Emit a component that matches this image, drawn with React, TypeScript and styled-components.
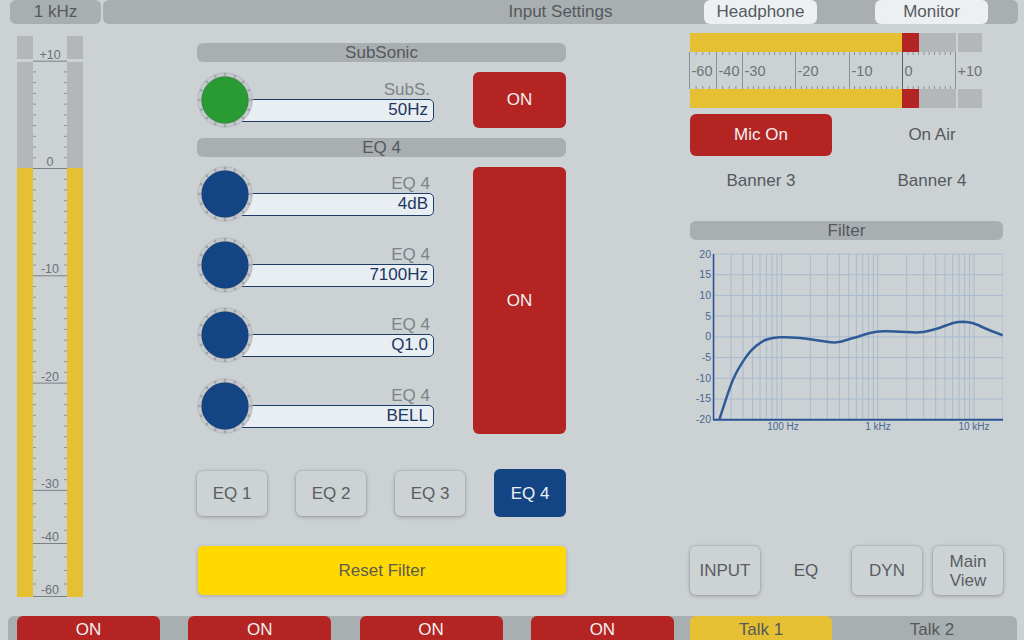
import styled, { createGlobalStyle } from 'styled-components';

const GlobalStyle = createGlobalStyle`
  * { box-sizing: border-box; }
  html, body { margin: 0; padding: 0; background: #ccd1d4; }
  body { font-family: "Liberation Sans", Arial, Helvetica, sans-serif; }
`;

const Screen = styled.div`
  width: 1024px;
  height: 640px;
  overflow: hidden;
  background: #ccd1d4;
  color: #55595d;
  font-size: 17px;
  display: flex;
  flex-direction: column;
`;

const TopBar = styled.header`
  height: 24px;
  flex: none;
  display: flex;
  gap: 2px;
  padding-left: 10px;
`;

const RateTab = styled.div`
  width: 91px;
  background: #a9aeb1;
  border-radius: 6px;
  text-align: center;
  line-height: 24px;
`;

const TitleBar = styled.div`
  width: 915px;
  background: #a9aeb1;
  border-radius: 6px;
  display: grid;
  grid-template-columns: 601px 113px 58px 113px 1fr;
  line-height: 24px;
`;

const Title = styled.div`
  grid-row: 1;
  grid-column: 1 / -1;
  justify-self: center;
`;

const OutTab = styled.div<{ $col: number }>`
  grid-row: 1;
  grid-column: ${p => p.$col};
  background: #edf0f3;
  border-radius: 6px;
  text-align: center;
`;

const Body = styled.main`
  height: 592px;
  flex: none;
  display: grid;
  grid-template-columns: 92px 97px 369px 124px 313px;
  padding-left: 8px;
`;

const MeterColumn = styled.section`
  grid-column: 1;
  padding: 12px 0 0 9px;
`;

const CenterColumn = styled.section`
  grid-column: 3;
  display: flex;
  flex-direction: column;
  padding: 19px 0 21px;
`;

const RightColumn = styled.section`
  grid-column: 5;
  display: flex;
  flex-direction: column;
  padding: 9px 0 21px;
`;

/* vertical level meter */
const VMeter = styled.div`
  display: flex;
  width: 66px;
  height: 561px;
`;

const VChannel = styled.div`
  width: 16px;
  display: flex;
  flex-direction: column;
  gap: 3px;
`;

const VCap = styled.div`
  height: 23px;
  flex: none;
  background: #b3b7ba;
`;

const VTrack = styled.div<{ $level: number }>`
  flex: 1;
  background: linear-gradient(to top, #e6c033 ${p => p.$level}%, #b3b7ba ${p => p.$level}%);
`;

const ScaleSvg = styled.svg<{ $shift?: number }>`
  display: block;
  flex: none;
  margin-left: ${p => p.$shift ?? 0}px;
  text {
    font-family: "Liberation Sans", Arial, sans-serif;
  }
`;

/* section headers */
const SectionHead = styled.div<{ $mt?: number }>`
  height: 19px;
  flex: none;
  margin-top: ${p => p.$mt ?? 0}px;
  background: #a9aeb1;
  border-radius: 6px;
  text-align: center;
  line-height: 19px;
`;

const ControlGrid = styled.div<{ $mt: number }>`
  margin-top: ${p => p.$mt}px;
  display: grid;
  grid-template-columns: 237px 1fr 93px;
`;

const KnobStack = styled.div`
  display: flex;
  flex-direction: column;
  gap: 14.5px;
`;

const Control = styled.div`
  display: grid;
  grid-template-columns: 56px 1fr;
  grid-template-rows: 27px 23px 6px;
  height: 56px;
`;

const KnobSvg = styled.svg`
  grid-column: 1;
  grid-row: 1 / -1;
  width: 56px;
  height: 56px;
  z-index: 1;
`;

const ControlLabel = styled.div`
  grid-column: 2;
  grid-row: 1;
  align-self: end;
  text-align: right;
  padding-right: 4px;
  line-height: 19px;
  margin-bottom: 0;
  color: #7e8388;
`;

const ValueField = styled.div`
  grid-column: 1 / -1;
  grid-row: 2;
  margin-left: 28px;
  border: 1.5px solid #1f3c69;
  border-radius: 5px;
  background: #e9eef2;
  color: #1c3762;
  text-align: right;
  padding-right: 5px;
  line-height: 20px;
`;

const OnButton = styled.div<{ $tall?: boolean }>`
  grid-column: 3;
  height: ${p => (p.$tall ? '267px' : '56px')};
  margin-top: ${p => (p.$tall ? '1px' : '0')};
  background: #b32422;
  color: #f1f1f1;
  border-radius: 6px;
  display: flex;
  align-items: center;
  justify-content: center;
`;

const PageRow = styled.div`
  margin-top: 35px;
  height: 48px;
  display: flex;
  justify-content: space-between;
  align-items: center;
`;

const SoftButton = styled.div<{ $active?: boolean; $tall?: boolean }>`
  width: ${p => (p.$active ? 72 : 70)}px;
  height: ${p => (p.$tall ? 49 : p.$active ? 48 : 45)}px;
  background: ${p => (p.$active ? '#134483' : '#cdd2d5')};
  color: ${p => (p.$active ? '#eef2f6' : '#5a5e62')};
  border-radius: 6px;
  box-shadow: ${p => (p.$active ? 'none' : '0 0 0 1px rgba(0,0,0,0.05), 0 1px 4px rgba(0,0,0,0.25)')};
  display: flex;
  align-items: center;
  justify-content: center;
  text-align: center;
  line-height: 19px;
`;

const ResetButton = styled.div`
  margin-top: auto;
  margin-left: 1px;
  height: 49px;
  flex: none;
  background: #ffd900;
  color: #5e5c4e;
  border-radius: 5px;
  box-shadow: 0 1px 4px rgba(0,0,0,0.2);
  display: flex;
  align-items: center;
  justify-content: center;
`;

/* right column */
const HMeter = styled.div`
  height: 75px;
  flex: none;
  display: flex;
  flex-direction: column;
`;

const HRow = styled.div`
  height: 19px;
  display: flex;
  gap: 2px;
`;

const HTrack = styled.div`
  width: 266px;
  display: flex;
  background: #b3b7ba;
`;

const HFill = styled.div<{ $w: number; $c: string }>`
  width: ${p => p.$w}px;
  background: ${p => p.$c};
`;

const HCap = styled.div`
  width: 24px;
  background: #b3b7ba;
`;

const StatusRow = styled.div<{ $mt: number }>`
  margin-top: ${p => p.$mt}px;
  height: 42px;
  flex: none;
  display: grid;
  grid-template-columns: 142px 1fr;
  column-gap: 29px;
`;

const StatusCell = styled.div<{ $on?: boolean }>`
  display: flex;
  align-items: center;
  justify-content: center;
  border-radius: 6px;
  background: ${p => (p.$on ? '#b32422' : 'transparent')};
  color: ${p => (p.$on ? '#f1f1f1' : '#55595d')};
`;

const ChartSvg = styled.svg`
  margin-top: 6px;
  display: block;
  flex: none;
  text {
    font-family: "Liberation Sans", Arial, sans-serif;
  }
`;

const ViewRow = styled.div`
  margin-top: auto;
  height: 49px;
  flex: none;
  display: flex;
  justify-content: space-between;
  align-items: stretch;
`;

const ViewLabel = styled.div`
  width: 70px;
  display: flex;
  align-items: center;
  justify-content: center;
`;

/* bottom strip */
const BottomBar = styled.footer`
  height: 28px;
  flex: none;
  width: 1009px;
  margin-left: 8px;
  background: #a9aeb1;
  border-radius: 6px 6px 0 0;
  display: flex;
  justify-content: space-between;
  padding: 0 14px 0 9px;
`;

const ChannelGroup = styled.div`
  display: flex;
  gap: 28.3px;
`;

const TalkGroup = styled.div`
  width: 313px;
  display: grid;
  grid-template-columns: 142px 1fr;
  column-gap: 29px;
`;

const StripButton = styled.div<{ $tone: 'red' | 'yellow' | 'none' }>`
  width: ${p => (p.$tone === 'red' ? '143px' : 'auto')};
  border-radius: 6px 6px 0 0;
  background: ${p => (p.$tone === 'red' ? '#b32422' : p.$tone === 'yellow' ? '#e6c033' : 'transparent')};
  color: ${p => (p.$tone === 'red' ? '#f1f1f1' : '#55595d')};
  text-align: center;
  line-height: 28px;
`;

/* drawings */
const vY = (db: number) =>
  db >= -30 ? 132 - db * 10.73 : db >= -40 ? 454 + (-30 - db) * 5.3 : 507 + (-40 - db) * 2.7;
const hX = (db: number) =>
  db >= -30 ? 213 + db * 5.33 : db >= -40 ? 53 - (-30 - db) * 2.65 : 26.5 - (-40 - db) * 1.325;

const MAJORS = [10, 0, -10, -20, -30, -40, -60];
const MINORS: number[] = [];
for (let d = 9; d > -30; d--) if (d % 10 !== 0) MINORS.push(d);
MINORS.push(-32.5, -35, -37.5, -45, -50, -55);
const lbl = (d: number) => (d > 0 ? `+${d}` : `${d}`);

const VScale = () => (
  <ScaleSvg width={34} height={561}>
    {MINORS.map(d => (
      <g key={d} stroke="#8b9196" strokeWidth={1}>
        <line x1={0} x2={3} y1={vY(d) + 0.5} y2={vY(d) + 0.5} />
        <line x1={31} x2={34} y1={vY(d) + 0.5} y2={vY(d) + 0.5} />
      </g>
    ))}
    {MAJORS.map(d => {
      const y = Math.min(vY(d), 560) + 0.5;
      return (
        <g key={d}>
          <line x1={0} x2={34} y1={y} y2={y} stroke="#7c8287" strokeWidth={1} />
          <text x={17} y={y - 2.5} textAnchor="middle" fontSize={12.5} fill="#6b7176">
            {lbl(d)}
          </text>
        </g>
      );
    })}
  </ScaleSvg>
);

const HScale = () => (
  <ScaleSvg width={293} height={37} $shift={-1}>
    {MINORS.map(d => (
      <g key={d} stroke="#8b9196" strokeWidth={1}>
        <line x1={hX(d) + 0.5} x2={hX(d) + 0.5} y1={0} y2={3} />
        <line x1={hX(d) + 0.5} x2={hX(d) + 0.5} y1={34} y2={37} />
      </g>
    ))}
    {MAJORS.map(d => {
      const x = Math.round(hX(d)) + 0.5;
      return (
        <g key={d}>
          <line x1={x} x2={x} y1={0} y2={37} stroke={d === 0 ? '#5c6267' : '#8b9196'} strokeWidth={1} />
          <text x={x + 2} y={24} fontSize={14.5} fill="#6b7176">
            {lbl(d)}
          </text>
        </g>
      );
    })}
  </ScaleSvg>
);

const DOTS = Array.from({ length: 16 }, (_, i) => {
  const a = (i / 16) * Math.PI * 2;
  return [28 + Math.cos(a) * 25.6, 28 + Math.sin(a) * 25.6];
});

const Knob = ({ color }: { color: string }) => (
  <KnobSvg viewBox="0 0 56 56">
    <circle cx={28} cy={28} r={27.3} fill="#c6cacd" stroke="#b4b9bd" strokeWidth={1} />
    {DOTS.map(([x, y], i) => (
      <rect key={i} x={x - 1.2} y={y - 1.2} width={2.4} height={2.4} fill="#9ea3a7" />
    ))}
    <circle cx={28} cy={28} r={23.5} fill={color} stroke="rgba(20,30,40,0.25)" strokeWidth={0.8} />
  </KnobSvg>
);

const fx = (f: number) => 91.4 + 96.3 * (Math.log10(f) - 2);
const fy = (db: number) => 8 + (20 - db) * 4.1425;
const FREQS: number[] = [];
for (const dec of [10, 100, 1000, 10000])
  for (let k = 1; k <= 9; k++) {
    const f = dec * k;
    if (f >= 20 && f <= 20000) FREQS.push(f);
  }

const CURVE: [number, number][] = [
  [29.3, 173.7], [43.3, 133], [56.7, 110], [66.7, 99.5], [76.7, 93.5], [90, 91.3],
  [110, 92], [130, 94.7], [146.7, 96.3], [163.3, 92], [180, 87], [193.3, 85.3],
  [210, 85.7], [230, 86.3], [246.7, 82.7], [263.3, 77], [273.3, 75.7], [283.3, 77.3],
  [296.7, 83], [312.7, 89.3],
];

const smooth = (pts: [number, number][]) => {
  let d = `M${pts[0][0]},${pts[0][1]}`;
  for (let i = 0; i < pts.length - 1; i++) {
    const p0 = pts[i - 1] || pts[i];
    const p1 = pts[i];
    const p2 = pts[i + 1];
    const p3 = pts[i + 2] || p2;
    const c1 = [p1[0] + (p2[0] - p0[0]) / 6, p1[1] + (p2[1] - p0[1]) / 6];
    const c2 = [p2[0] - (p3[0] - p1[0]) / 6, p2[1] - (p3[1] - p1[1]) / 6];
    d += ` C${c1[0].toFixed(1)},${c1[1].toFixed(1)} ${c2[0].toFixed(1)},${c2[1].toFixed(1)} ${p2[0]},${p2[1]}`;
  }
  return d;
};

const FilterChart = () => (
  <ChartSvg width={313} height={190}>
    <defs>
      <clipPath id="plot">
        <rect x={23} y={7} width={290} height={167} />
      </clipPath>
    </defs>
    {[20, 15, 10, 5, 0, -5, -10, -15, -20].map(db => (
      <g key={db}>
        <line x1={23} x2={313} y1={fy(db)} y2={fy(db)} stroke="#a9bad2" strokeWidth={1} />
        <text x={21} y={fy(db) + 3.5} textAnchor="end" fontSize={10.5} fill="#49678f">
          {db}
        </text>
      </g>
    ))}
    {FREQS.map(f => (
      <line key={f} x1={fx(f)} x2={fx(f)} y1={fy(20)} y2={fy(-20)} stroke="#a9bad2" strokeWidth={1} />
    ))}
    <line x1={23.5} x2={23.5} y1={fy(20)} y2={fy(-20)} stroke="#2b5592" strokeWidth={1.5} />
    <line x1={23} x2={313} y1={fy(-20)} y2={fy(-20)} stroke="#2b5592" strokeWidth={2} />
    <path d={smooth(CURVE)} fill="none" stroke="#2e5b96" strokeWidth={2.5} clipPath="url(#plot)" />
    <text x={93} y={184} textAnchor="middle" fontSize={10} fill="#49678f">100 Hz</text>
    <text x={188} y={184} textAnchor="middle" fontSize={10} fill="#49678f">1 kHz</text>
    <text x={284} y={184} textAnchor="middle" fontSize={10} fill="#49678f">10 kHz</text>
  </ChartSvg>
);

const eqControls = ['4dB', '7100Hz', 'Q1.0', 'BELL'];

export default function App() {
  return (
    <Screen>
      <GlobalStyle />
      <TopBar>
        <RateTab>1 kHz</RateTab>
        <TitleBar>
          <Title>Input Settings</Title>
          <OutTab $col={2}>Headphone</OutTab>
          <OutTab $col={4}>Monitor</OutTab>
        </TitleBar>
      </TopBar>

      <Body>
        <MeterColumn>
          <VMeter>
            <VChannel>
              <VCap />
              <VTrack $level={80.2} />
            </VChannel>
            <VScale />
            <VChannel>
              <VCap />
              <VTrack $level={80.2} />
            </VChannel>
          </VMeter>
        </MeterColumn>

        <CenterColumn>
          <SectionHead>SubSonic</SectionHead>
          <ControlGrid $mt={10}>
            <Control>
              <Knob color="#2a9a35" />
              <ControlLabel>SubS.</ControlLabel>
              <ValueField>50Hz</ValueField>
            </Control>
            <OnButton>ON</OnButton>
          </ControlGrid>

          <SectionHead $mt={10}>EQ 4</SectionHead>
          <ControlGrid $mt={9}>
            <KnobStack>
              {eqControls.map(v => (
                <Control key={v}>
                  <Knob color="#134483" />
                  <ControlLabel>EQ 4</ControlLabel>
                  <ValueField>{v}</ValueField>
                </Control>
              ))}
            </KnobStack>
            <OnButton $tall>ON</OnButton>
          </ControlGrid>

          <PageRow>
            <SoftButton>EQ 1</SoftButton>
            <SoftButton>EQ 2</SoftButton>
            <SoftButton>EQ 3</SoftButton>
            <SoftButton $active>EQ 4</SoftButton>
          </PageRow>

          <ResetButton>Reset Filter</ResetButton>
        </CenterColumn>

        <RightColumn>
          <HMeter>
            <HRow>
              <HTrack>
                <HFill $w={212} $c="#e6c033" />
                <HFill $w={17} $c="#b32422" />
              </HTrack>
              <HCap />
            </HRow>
            <HScale />
            <HRow>
              <HTrack>
                <HFill $w={212} $c="#e6c033" />
                <HFill $w={17} $c="#b32422" />
              </HTrack>
              <HCap />
            </HRow>
          </HMeter>

          <StatusRow $mt={6}>
            <StatusCell $on>Mic On</StatusCell>
            <StatusCell>On Air</StatusCell>
          </StatusRow>
          <StatusRow $mt={4}>
            <StatusCell>Banner 3</StatusCell>
            <StatusCell>Banner 4</StatusCell>
          </StatusRow>

          <SectionHead $mt={19}>Filter</SectionHead>
          <FilterChart />

          <ViewRow>
            <SoftButton $tall>INPUT</SoftButton>
            <ViewLabel>EQ</ViewLabel>
            <SoftButton $tall>DYN</SoftButton>
            <SoftButton $tall>Main<br />View</SoftButton>
          </ViewRow>
        </RightColumn>
      </Body>

      <BottomBar>
        <ChannelGroup>
          <StripButton $tone="red">ON</StripButton>
          <StripButton $tone="red">ON</StripButton>
          <StripButton $tone="red">ON</StripButton>
          <StripButton $tone="red">ON</StripButton>
        </ChannelGroup>
        <TalkGroup>
          <StripButton $tone="yellow">Talk 1</StripButton>
          <StripButton $tone="none">Talk 2</StripButton>
        </TalkGroup>
      </BottomBar>
    </Screen>
  );
}
